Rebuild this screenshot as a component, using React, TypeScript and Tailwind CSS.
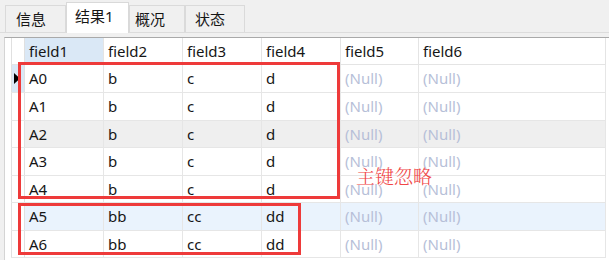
import React from "react";

const cols = [79, 79, 79, 79, 78, 187];
const heads = ["field1", "field2", "field3", "field4", "field5", "field6"];
const rows: { v: string[]; h: number; bg: string }[] = [
  { v: ["A0", "b", "c", "d"], h: 28, bg: "bg-white" },
  { v: ["A1", "b", "c", "d"], h: 28, bg: "bg-white" },
  { v: ["A2", "b", "c", "d"], h: 27, bg: "bg-[#efefef]" },
  { v: ["A3", "b", "c", "d"], h: 28, bg: "bg-white" },
  { v: ["A4", "b", "c", "d"], h: 27, bg: "bg-white" },
  { v: ["A5", "bb", "cc", "dd"], h: 28, bg: "bg-[#eaf3fd]" },
  { v: ["A6", "bb", "cc", "dd"], h: 27, bg: "bg-white" },
];

function Tab({ label, w, pl, active }: { label: string; w: number; pl: number; active?: boolean }) {
  return (
    <div
      style={{ width: w, paddingLeft: pl }}
      className={
        active
          ? "relative z-10 h-[31px] -mb-[1px] bg-white border-x border-t border-[#d9d9d9] flex items-center text-[15px] leading-none pb-[3px]"
          : "h-[27px] bg-[#f0f0f0] border-x border-t border-[#dadada] flex items-center text-[15px] leading-none"
      }
    >
      {label}
    </div>
  );
}

export default function App() {
  return (
    <div className="relative w-[609px] h-[260px] overflow-hidden bg-[#f0f0f0] text-[#161616] font-['Noto_Sans','Noto_Sans_CJK_SC',sans-serif]">
      <div className="h-[33px] flex items-end pl-[5px] border-b border-[#dcdcdc]">
        <Tab label="信息" w={61} pl={10} />
        <Tab label="结果1" w={63} pl={8} active />
        <Tab label="概况" w={56} pl={5} />
        <Tab label="状态" w={60} pl={9} />
      </div>
      <div className="h-[4px]" />
      <div className="ml-[4px] h-[223px] bg-white border-l border-t border-l-[#d4d4d4] border-t-[#a9a9a9] pl-[6px]">
        <div className="flex flex-col w-[595px]">
          <div className="flex h-[27px] border-b border-[#e4e4e4]">
            <div className="w-[14px] border-x border-[#e0e0e0]" />
            {heads.map((h, i) => (
              <div
                key={h}
                style={{ width: cols[i] }}
                className={
                  "flex items-center pl-[4px] border-r border-[#e4e4e4] text-[15px] " +
                  (i === 0 ? "bg-[#dae8f6]" : "")
                }
              >
                {h}
              </div>
            ))}
          </div>
          {rows.map((r, ri) => (
            <div key={ri} style={{ height: r.h }} className="flex border-b border-[#e6e6e6]">
              <div
                className={
                  "w-[14px] border-x border-[#e0e0e0] flex items-center pl-[2px] " +
                  (ri === 0 ? "bg-[#dae8f6]" : "bg-white")
                }
              >
                {ri === 0 && (
                  <svg width="6" height="11" viewBox="0 0 6 11" className="block">
                    <path d="M0 0 L6 5.5 L0 11 Z" fill="#000" />
                  </svg>
                )}
              </div>
              {cols.map((w, ci) => (
                <div
                  key={ci}
                  style={{ width: w }}
                  className={
                    "flex items-center pl-[4px] border-r border-[#e6e6e6] text-[15px] " +
                    r.bg +
                    (ci >= 4 ? " text-[#b7bfd8]" : "")
                  }
                >
                  {ci < 4 ? r.v[ci] : "(Null)"}
                </div>
              ))}
            </div>
          ))}
        </div>
      </div>

      <div className="absolute left-[18px] top-[62px] w-[322px] h-[137px] border-[3px] border-[#ee3a3a]" />
      <div className="absolute left-[18px] top-[203px] w-[283px] h-[52px] border-[3px] border-[#ee3a3a]" />
      <div className="absolute left-[356px] top-[166px] text-[19px] leading-[19px] text-[#f04545] font-['Noto_Serif_CJK_SC','Noto_Sans_CJK_SC',serif] font-light">
        主键忽略
      </div>
    </div>
  );
}
